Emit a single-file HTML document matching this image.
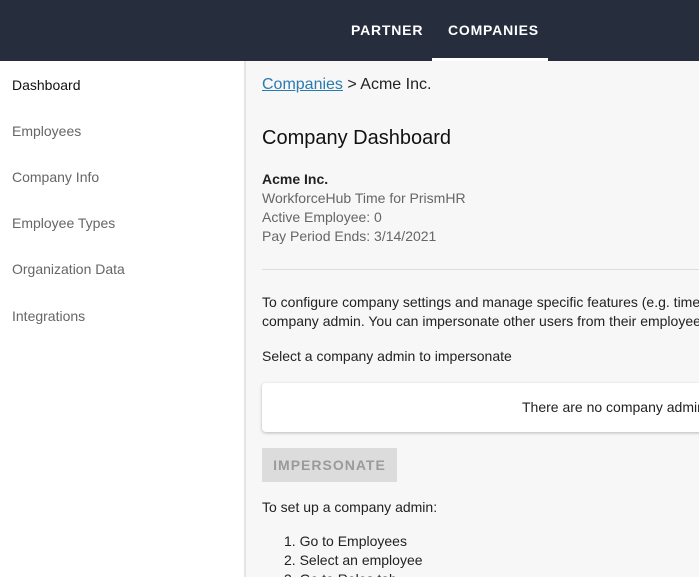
<!DOCTYPE html>
<html><head><style>
*{margin:0;padding:0;box-sizing:border-box}
html,body{width:699px;height:577px;overflow:hidden}
body{background:#f7f7f7;font-family:"Liberation Sans",Arial,sans-serif;position:relative;color:#222}
.wrap{position:absolute;left:0;top:0;width:699px;height:577px;overflow:hidden}
.hdr{position:absolute;left:0;top:0;width:699px;height:61px;background:#262e3d}
.tab{position:absolute;top:22px;color:#fff;font-size:14px;font-weight:bold;letter-spacing:0.8px}
.ul{position:absolute;left:432px;top:58px;width:116px;height:3px;background:#fff}
.side{position:absolute;left:0;top:61px;width:246px;height:516px;background:#fff;border-right:2px solid #e4e4e4}
.si{position:absolute;left:12px;font-size:14px;color:#666}
.t{position:absolute;left:262px;white-space:nowrap}
</style></head><body><div class="wrap">
<div class="hdr"></div>
<div class="tab" style="left:351px">PARTNER</div>
<div class="tab" style="left:448px">COMPANIES</div>
<div class="ul"></div>
<div class="side">
<div class="si" style="top:16px;color:#111">Dashboard</div>
<div class="si" style="top:62px">Employees</div>
<div class="si" style="top:108px">Company Info</div>
<div class="si" style="top:154px">Employee Types</div>
<div class="si" style="top:200px">Organization Data</div>
<div class="si" style="top:247px">Integrations</div>
</div>
<div class="t" style="top:76px;font-size:16px"><span style="color:#2a7bb0;text-decoration:underline">Companies</span> &gt; Acme Inc.</div>
<div class="t" style="top:127px;font-size:20px;color:#111">Company Dashboard</div>
<div class="t" style="top:171px;font-size:14px;font-weight:bold">Acme Inc.</div>
<div class="t" style="top:190px;font-size:14px;color:#666">WorkforceHub Time for PrismHR</div>
<div class="t" style="top:209px;font-size:14px;color:#666">Active Employee: 0</div>
<div class="t" style="top:228px;font-size:14px;color:#666">Pay Period Ends: 3/14/2021</div>
<div style="position:absolute;left:262px;top:269px;width:437px;height:1px;background:#ddd"></div>
<div class="t" style="top:294px;font-size:14px">To configure company settings and manage specific features (e.g. time off policies), impersonate a</div>
<div class="t" style="top:313px;font-size:14px">company admin. You can impersonate other users from their employee profile.</div>
<div class="t" style="top:348px;font-size:14px">Select a company admin to impersonate</div>
<div style="position:absolute;left:262px;top:383px;width:460px;height:49px;background:#fff;border-radius:4px;box-shadow:0 1px 3px rgba(0,0,0,.25)"></div>
<div class="t" style="left:522px;top:399px;font-size:14px">There are no company admins</div>
<div style="position:absolute;left:262px;top:448px;width:135px;height:34px;background:#dcdcdc;color:#9a9a9a;font-size:14px;font-weight:bold;letter-spacing:1px;text-align:center;line-height:34px">IMPERSONATE</div>
<div class="t" style="top:499px;font-size:14px">To set up a company admin:</div>
<div class="t" style="left:284px;top:533px;font-size:14px">1. Go to Employees</div>
<div class="t" style="left:284px;top:552px;font-size:14px">2. Select an employee</div>
<div class="t" style="left:284px;top:571px;font-size:14px">3. Go to Roles tab</div>
</div></body></html>
